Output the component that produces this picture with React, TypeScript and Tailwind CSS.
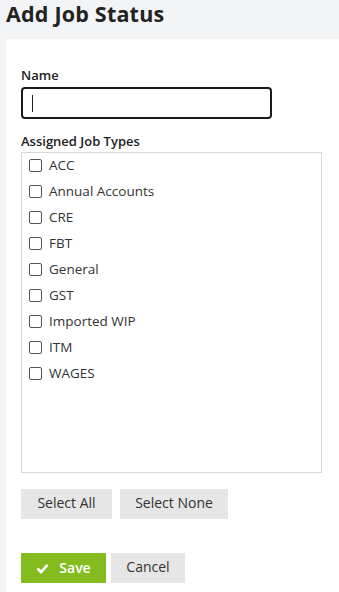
import React from "react";

const types = ["ACC", "Annual Accounts", "CRE", "FBT", "General", "GST", "Imported WIP", "ITM", "WAGES"];

export default function App() {
  return (
    <div
      className="min-h-[592px] w-[339px] bg-[#f3f4f6] text-[#333]"
      style={{ fontFamily: "'Open Sans', 'Noto Sans', sans-serif" }}
    >
      <h1 className="h-[39px] pl-[6px] text-[21.5px] font-bold leading-[27px] tracking-[0.2px] text-[#222]">Add Job Status</h1>
      <div className="ml-[6px] min-h-[553px] bg-white pl-[15px] pr-[17px] pt-[28px]">
        <label className="block text-[13px] font-semibold leading-[17px] text-[#222]">Name</label>
        <div className="mt-[3px] flex h-[32px] w-[251px] items-center rounded-[4px] border-2 border-[#1a1a1a] pl-[9px]">
          <div className="h-[17px] w-px bg-[#222]" />
        </div>
        <label className="mt-[14px] block text-[13px] font-semibold leading-[17px] text-[#222]">Assigned Job Types</label>
        <div className="mt-[2px] h-[321px] border border-[#d9d9d9]">
          {types.map((t) => (
            <div key={t} className="flex h-[26px] items-center pb-[2px] pl-[7px]">
              <div className="h-[13px] w-[13px] rounded-[2px] border border-[#555] bg-white" />
              <span className="ml-[7px] text-[13.5px] text-[#333]">{t}</span>
            </div>
          ))}
        </div>
        <div className="mt-[16px] flex gap-[8px]">
          <button className="h-[30px] w-[91px] bg-[#e6e6e6] pb-[3px] text-[14px] text-[#333]">Select All</button>
          <button className="h-[30px] w-[108px] bg-[#e6e6e6] pb-[3px] text-[14px] text-[#333]">Select None</button>
        </div>
        <div className="mt-[34px] flex gap-[5px]">
          <button className="flex h-[30px] w-[85px] items-center justify-center gap-[10px] bg-[#84bc1f] pb-[2px] text-[14px] font-semibold text-white">
            <svg width="13" height="11" viewBox="0 0 13 11" className="mt-[2px]"><path d="M1.5 5.5 L5 9 L11.5 1.8" fill="none" stroke="white" strokeWidth="2.6" /></svg>
            Save
          </button>
          <button className="h-[30px] w-[74px] bg-[#e6e6e6] pb-[3px] text-[14px] text-[#333]">Cancel</button>
        </div>
      </div>
    </div>
  );
}
